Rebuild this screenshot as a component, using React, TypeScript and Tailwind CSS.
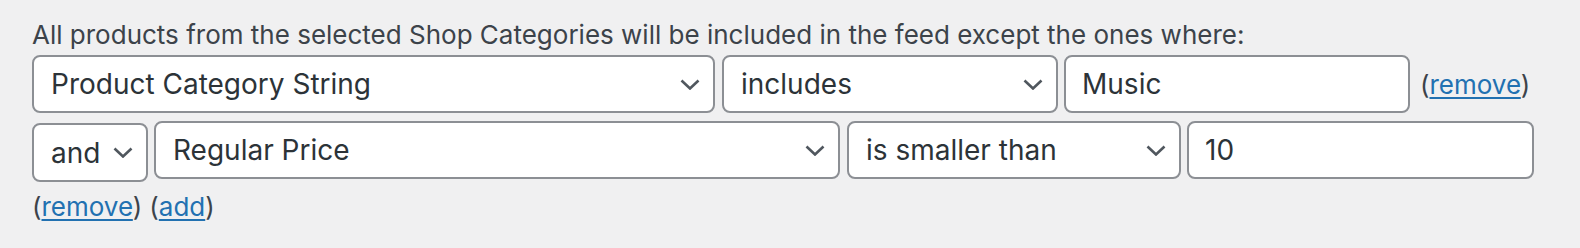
import React from "react";

const font = { fontFamily: "Inter, 'Noto Sans', sans-serif" };

function Chevron() {
  return (
    <svg width="20" height="11" viewBox="0 0 20 11" fill="none" className="shrink-0">
      <polyline points="1.5,1.5 10,9.5 18.5,1.5" stroke="#50575e" strokeWidth="2.6" />
    </svg>
  );
}

function Select({ label, className }: { label: string; className: string }) {
  return (
    <div
      className={`flex items-center justify-between h-[58px] rounded-[8px] border-2 border-[#8c8f94] bg-white pl-[17px] pr-[13px] text-[28px] text-[#2c3338] ${className}`}
    >
      <span className="truncate">{label}</span>
      <Chevron />
    </div>
  );
}

function Field({ value, className }: { value: string; className: string }) {
  return (
    <input
      readOnly
      defaultValue={value}
      className={`h-[58px] rounded-[8px] border-2 border-[#8c8f94] bg-white px-[16px] text-[28px] text-[#2c3338] outline-none ${className}`}
      style={font}
    />
  );
}

function LinkText({ label }: { label: string }) {
  return (
    <span className="text-[#3c434a]">
      (<a href="#" className="text-[#2271b1] underline underline-offset-[3px]">{label}</a>)
    </span>
  );
}

export default function App() {
  return (
    <div className="w-[1580px] h-[248px] bg-[#f0f0f1] pl-[32px] pt-[18px]" style={font}>
      <p className="text-[26px] leading-[34px] text-[#3c434a]">
        All products from the selected Shop Categories will be included in the feed except the ones where:
      </p>

      {/* first condition */}
      <div className="flex items-center mt-[3px]">
        <Select label="Product Category String" className="w-[683px]" />
        <Select label="includes" className="w-[336px] ml-[7px]" />
        <Field value="Music" className="w-[346px] ml-[6px]" />
        <span className="ml-[10px] text-[26px]">
          <LinkText label="remove" />
        </span>
      </div>

      {/* second condition */}
      <div className="flex items-start mt-[8px]">
        <Select label="and" className="w-[116px] h-[59px] mt-[2px]" />
        <Select label="Regular Price" className="w-[686px] ml-[6px]" />
        <Select label="is smaller than" className="w-[334px] ml-[7px]" />
        <Field value="10" className="w-[347px] ml-[6px]" />
      </div>

      <div className="flex gap-[7px] mt-[8px] text-[26px] leading-[34px]">
        <LinkText label="remove" />
        <LinkText label="add" />
      </div>
    </div>
  );
}
